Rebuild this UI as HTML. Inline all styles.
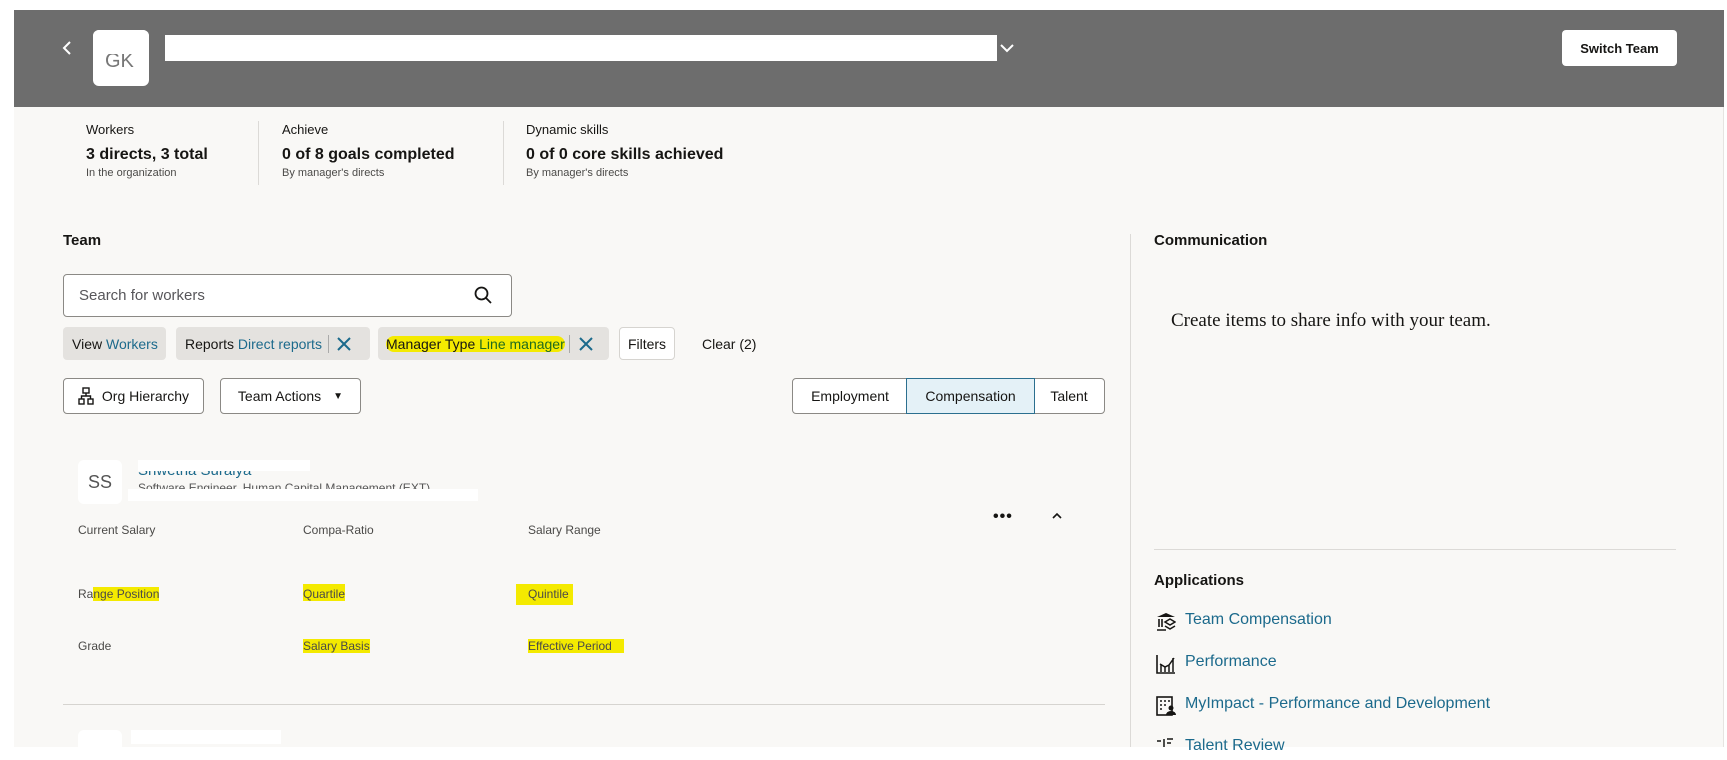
<!DOCTYPE html>
<html><head><meta charset="utf-8"><style>
*{margin:0;padding:0;box-sizing:border-box}
body{width:1727px;height:747px;overflow:hidden;background:#fff;font-family:"Liberation Sans",sans-serif;color:#161513;position:relative}
.abs{position:absolute}
#main{left:14px;top:10px;width:1710px;height:737px;background:#f9f8f6;border-right:1px solid #e6e4e1}
#hdr{left:14px;top:10px;width:1710px;height:97px;background:#6d6d6d}
.t13{font-size:13px}
.lbl{font-size:12px;color:#4b4a48}
.btn{border:1px solid #8b8985;border-radius:4px;background:#fff;font-size:14px;font-weight:bold;display:flex;align-items:center;justify-content:center}
.chip{background:#e4e2df;border-radius:4px;font-size:14px;display:flex;align-items:center;padding-left:9px}
.lnk{color:#1c6a8c}
.hl{background:#f4ea00}
.app{font-size:16px;color:#1c6a8c}
</style></head><body>
<div id="main" class="abs"></div>
<div id="hdr" class="abs"></div>
<svg class="abs" style="left:61px;top:40px" width="12" height="16"><path d="M9 2L3 8l6 6" stroke="#fff" stroke-width="2" fill="none"/></svg>
<div class="abs" style="left:93px;top:30px;width:56px;height:56px;background:#fff;border-radius:6px;overflow:hidden"><div style="position:absolute;left:12px;top:20px;font-size:20px;color:#777">GK</div><div style="position:absolute;left:0;top:0;width:56px;height:24px;background:#fff"></div></div>
<div class="abs" style="left:165px;top:35px;width:832px;height:26px;background:#fff"></div>
<svg class="abs" style="left:999px;top:42px" width="16" height="12"><path d="M2 3l6 6 6-6" stroke="#fff" stroke-width="2" fill="none"/></svg>
<div class="abs btn" style="left:1562px;top:30px;width:115px;height:36px;border:none;font-size:13px">Switch Team</div>

<div class="abs t13" style="left:86px;top:122px">Workers</div>
<div class="abs" style="left:86px;top:146px;font-size:16px;font-weight:bold">3 directs, 3 total</div>
<div class="abs lbl" style="left:86px;top:167px;font-size:11px">In the organization</div>
<div class="abs" style="left:258px;top:121px;width:1px;height:64px;background:#dcdad7"></div>
<div class="abs t13" style="left:282px;top:122px">Achieve</div>
<div class="abs" style="left:282px;top:146px;font-size:16px;font-weight:bold">0 of 8 goals completed</div>
<div class="abs lbl" style="left:282px;top:167px;font-size:11px">By manager's directs</div>
<div class="abs" style="left:503px;top:121px;width:1px;height:64px;background:#dcdad7"></div>
<div class="abs t13" style="left:526px;top:122px">Dynamic skills</div>
<div class="abs" style="left:526px;top:146px;font-size:16px;font-weight:bold">0 of 0 core skills achieved</div>
<div class="abs lbl" style="left:526px;top:167px;font-size:11px">By manager's directs</div>

<div class="abs" style="left:63px;top:232px;font-size:15px;font-weight:bold">Team</div>
<div class="abs" style="left:1130px;top:234px;width:1px;height:513px;background:#dcdad7"></div>

<div class="abs" style="left:63px;top:274px;width:449px;height:43px;border:1px solid #8b8985;border-radius:4px;background:#fff"></div>
<div class="abs" style="left:79px;top:287px;font-size:15px;color:#57565a">Search for workers</div>
<svg class="abs" style="left:473px;top:285px" width="20" height="20"><circle cx="8.5" cy="8.5" r="6" stroke="#161513" stroke-width="1.8" fill="none"/><path d="M13 13l5 5" stroke="#161513" stroke-width="1.8"/></svg>

<div class="abs chip" style="left:63px;top:327px;width:103px;height:33px">View&nbsp;<span class="lnk">Workers</span></div>
<div class="abs chip" style="left:176px;top:327px;width:194px;height:33px">Reports&nbsp;<span class="lnk">Direct reports</span><span style="width:1px;height:18px;background:#aaa;margin-left:6px"></span>
<svg style="margin-left:7px" width="16" height="16"><path d="M2 2l12 12M14 2L2 14" stroke="#1c6a8c" stroke-width="2"/></svg></div>
<div class="abs chip" style="left:378px;top:327px;width:231px;height:33px;padding-left:8px"><span class="hl" style="border-radius:8px">Manager Type <span style="color:#1e6a1e">Line manager</span></span><span style="width:1px;height:18px;background:#aaa;margin-left:4px"></span>
<svg style="margin-left:8px" width="16" height="16"><path d="M2 2l12 12M14 2L2 14" stroke="#1c6a8c" stroke-width="2"/></svg></div>
<div class="abs btn" style="left:619px;top:327px;width:56px;height:33px;font-weight:normal;border-color:#d6d4d0">Filters</div>
<div class="abs" style="left:702px;top:336px;font-size:14px">Clear (2)</div>

<div class="abs btn" style="left:63px;top:378px;width:141px;height:36px;font-weight:normal;font-size:14px">
<svg width="16" height="18" style="margin-right:8px"><rect x="5" y="1" width="6" height="5" fill="none" stroke="#161513" stroke-width="1.4"/><rect x="1" y="12" width="5" height="5" fill="none" stroke="#161513" stroke-width="1.4"/><rect x="10" y="12" width="5" height="5" fill="none" stroke="#161513" stroke-width="1.4"/><path d="M8 6v3M3.5 12V9h9v3" fill="none" stroke="#161513" stroke-width="1.4"/></svg>Org Hierarchy</div>
<div class="abs btn" style="left:220px;top:378px;width:141px;height:36px;font-weight:normal">Team Actions<span style="font-size:10px;margin-left:12px">▼</span></div>
<div class="abs" style="left:792px;top:378px;width:313px;height:36px;border:1px solid #8b8985;border-radius:4px;background:#fff;display:flex;font-size:14px">
<div style="width:114px;display:flex;align-items:center;justify-content:center">Employment</div>
<div style="width:127px;display:flex;align-items:center;justify-content:center;background:#e4f1f7;outline:1px solid #2b6f8f">Compensation</div>
<div style="flex:1;display:flex;align-items:center;justify-content:center">Talent</div></div>

<div class="abs" style="left:78px;top:460px;width:44px;height:44px;background:#fff;border-radius:6px;display:flex;align-items:center;justify-content:center;font-size:18px;color:#555">SS</div>
<div class="abs" style="left:138px;top:462px;font-size:15px;color:#1c6a8c">Shwetha Suraiya</div>
<div class="abs" style="left:138px;top:460px;width:172px;height:11px;background:#fff"></div>
<div class="abs" style="left:138px;top:481px;font-size:12px;color:#555;height:8px;overflow:hidden">Software Engineer, Human Capital Management (EXT)</div>
<div class="abs" style="left:128px;top:489px;width:350px;height:12px;background:#fff"></div>
<div class="abs" style="left:993px;top:508px;font-size:16px;font-weight:bold;letter-spacing:1px">•••</div>
<svg class="abs" style="left:1051px;top:512px" width="12" height="8"><path d="M2 6l4-4 4 4" stroke="#161513" stroke-width="1.6" fill="none"/></svg>

<div class="abs lbl" style="left:78px;top:523px">Current Salary</div>
<div class="abs lbl" style="left:303px;top:523px">Compa-Ratio</div>
<div class="abs lbl" style="left:528px;top:523px">Salary Range</div>
<div class="abs lbl" style="left:78px;top:587px">Ra<span class="hl">nge Position</span></div>
<div class="abs lbl" style="left:303px;top:587px"><span class="hl" style="padding-top:3px">Quartile</span></div>
<div class="abs lbl" style="left:516px;top:587px"><span class="hl" style="padding:3px 4px 4px 12px">Quintile</span></div>
<div class="abs lbl" style="left:78px;top:639px">Grade</div>
<div class="abs lbl" style="left:303px;top:639px"><span class="hl">Salary Basis</span></div>
<div class="abs lbl" style="left:528px;top:639px"><span class="hl" style="padding-right:12px">Effective Period</span></div>

<div class="abs" style="left:63px;top:704px;width:1042px;height:1px;background:#d6d4d0"></div>
<div class="abs" style="left:78px;top:730px;width:44px;height:30px;background:#fff;border-radius:6px"></div>
<div class="abs" style="left:131px;top:730px;width:150px;height:14px;background:#fff"></div>

<div class="abs" style="left:1154px;top:232px;font-size:15px;font-weight:bold">Communication</div>
<div class="abs" style="left:1171px;top:310px;font-size:19px;font-family:'Liberation Serif',serif">Create items to share info with your team.</div>
<div class="abs" style="left:1154px;top:549px;width:522px;height:1px;background:#dcdad7"></div>
<div class="abs" style="left:1154px;top:572px;font-size:15px;font-weight:bold">Applications</div>
<svg class="abs" style="left:1156px;top:612px" width="20" height="20"><path d="M1 5L10 1l9 4z" fill="#161513"/><path d="M3 7v8M6 7v8M1 18h9" stroke="#161513" stroke-width="1.6"/><path d="M9 10l5-3 5 3-5 3zM9 14l5 3 5-3" stroke="#161513" stroke-width="1.5" fill="none"/></svg>
<div class="abs app" style="left:1185px;top:611px">Team Compensation</div>
<svg class="abs" style="left:1156px;top:654px" width="20" height="20"><path d="M1 1v18h18" stroke="#161513" stroke-width="1.6" fill="none"/><path d="M5 18v-8M9 18v-5M13 18v-7M17 18V4M4 10l5 3 4-2 5-7" stroke="#161513" stroke-width="1.5" fill="none"/></svg>
<div class="abs app" style="left:1185px;top:653px">Performance</div>
<svg class="abs" style="left:1156px;top:696px" width="20" height="20"><rect x="1" y="1" width="15" height="18" fill="none" stroke="#161513" stroke-width="1.6"/><path d="M4 5h2M8 5h2M12 5h2M4 9h2M8 9h2M4 13h2" stroke="#161513" stroke-width="1.5"/><circle cx="15" cy="12" r="2.5" fill="#161513"/><path d="M10 19a5 4 0 0 1 10 0z" fill="#161513"/></svg>
<div class="abs app" style="left:1185px;top:695px">MyImpact - Performance and Development</div>
<svg class="abs" style="left:1156px;top:738px" width="20" height="9"><path d="M1 3h4M8 1v8M11 1h6M11 5h4" stroke="#161513" stroke-width="1.5"/></svg>
<div class="abs app" style="left:1185px;top:737px">Talent Review</div>
</body></html>
